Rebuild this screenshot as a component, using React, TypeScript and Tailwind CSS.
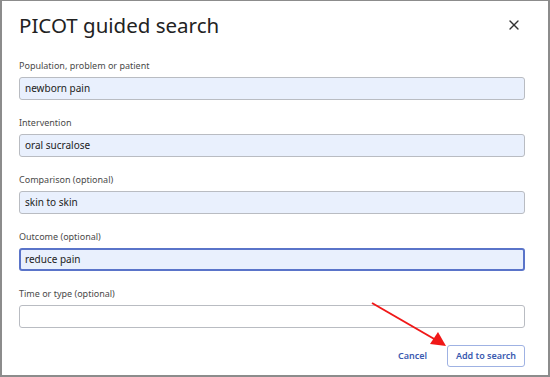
import { X } from 'lucide-react';

type Field = {
  label: string;
  value: string;
  filled?: boolean;
  focused?: boolean;
};

const FIELDS: Field[] = [
  { label: 'Population, problem or patient', value: 'newborn pain', filled: true },
  { label: 'Intervention', value: 'oral sucralose', filled: true },
  { label: 'Comparison (optional)', value: 'skin to skin', filled: true },
  { label: 'Outcome (optional)', value: 'reduce pain', filled: true, focused: true },
  { label: 'Time or type (optional)', value: '' },
];

function FieldRow({ field }: { field: Field }): React.ReactElement {
  const box = field.focused
    ? 'border-2 border-[#5a74c9] px-[4px]'
    : 'border border-[#b9bcc2] px-[5px]';
  const bg = field.filled ? 'bg-[#e9f0fd]' : 'bg-white';
  return (
    <div className="flex flex-col">
      <label className="h-[14px] text-[9px] leading-[14px] text-[#4a4a4a]">{field.label}</label>
      <div
        className={`mt-[4px] flex h-[23px] items-center rounded-[3px] text-[10px] text-[#222] ${box} ${bg}`}
      >
        {field.value}
      </div>
    </div>
  );
}

export default function App(): React.ReactElement {
  return (
    <div
      className="relative h-[377px] w-[550px] overflow-hidden border-2 border-t border-[#8c8c8c] bg-white"
      style={{ fontFamily: '"Noto Sans", "Open Sans", sans-serif' }}
    >
      <div className="flex flex-col pl-[17px] pr-[23px]">
        <div className="mt-[9px] flex h-[30px] items-center justify-between">
          <h1 className="text-[20.5px] font-normal leading-[30px] text-[#222]">PICOT guided search</h1>
          <X className="mr-[3px] h-[16px] w-[16px] text-[#333]" strokeWidth={2} />
        </div>
        <div className="mt-[19px] flex flex-col gap-[16px]">
          {FIELDS.map((f) => (
            <FieldRow key={f.label} field={f} />
          ))}
        </div>
        <div className="mt-[17px] flex items-center justify-end gap-[20px]">
          <span className="text-[9px] font-semibold text-[#3a5ab0]">Cancel</span>
          <span className="flex h-[22px] w-[78px] items-center justify-center rounded-[3px] border border-[#9fb2e3] text-[9px] font-semibold text-[#3a5ab0]">
            Add to search
          </span>
        </div>
      </div>
      <svg className="absolute left-0 top-0" width="550" height="377" viewBox="0 0 550 377">
        <line x1="370" y1="302" x2="434" y2="339" stroke="#f01818" strokeWidth="2" />
        <polygon points="444,345 428,343 436,331" fill="#f01818" />
      </svg>
    </div>
  );
}
